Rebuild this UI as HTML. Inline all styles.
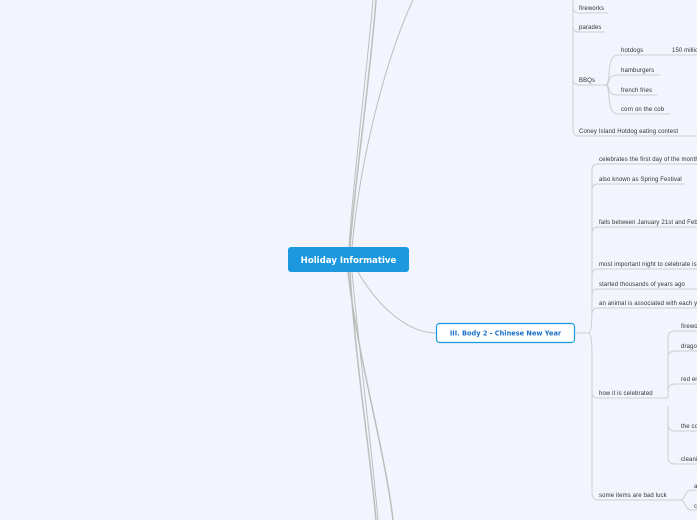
<!DOCTYPE html>
<html><head><style>
html,body{margin:0;padding:0;background:#f2f5fd;width:697px;height:520px;overflow:hidden}
svg{display:block}
text{font-family:"Liberation Sans",sans-serif;font-size:6px;fill:#333;letter-spacing:0.12px}
</style></head><body>
<svg width="697" height="520" viewBox="0 0 697 520">
<g fill="none" stroke="#bdbdbd" stroke-width="1.5">
<path d="M376 0 C370 80 355 180 350 247"/>
<path d="M373 0 C366 80 353 180 349 247" stroke-width="1"/>
<path d="M413 0 C385 60 360 160 352 247" stroke-width="1"/>
<path d="M350 272 C355 360 370 450 376 520"/>
<path d="M348 272 C358 360 385 450 393 520"/>
<path d="M352 272 C360 360 372 450 378 520" stroke-width="1"/>
<path d="M358 272 C380 310 410 333 436 333" stroke-width="1"/>
</g>
<g fill="none" stroke="#cfcfcf" stroke-width="1">
<path d="M573 0 V130 Q573 136 579 136 H697"/>
<path d="M573 7 Q573 13 579 13 H608"/>
<path d="M573 26 Q573 32 579 32 H605"/>
<path d="M573 79 Q573 85 579 85 H600"/>
<path d="M600 85 H605 C612 85 605 55 618 55 H697"/>
<path d="M605 85 C612 85 605 75 618 75 H660"/>
<path d="M605 85 C612 85 605 95 618 95 H657"/>
<path d="M605 85 C612 85 605 114 618 114 H670"/>
<path d="M575 333 H588"/>
<path d="M588 333 C592 333 592 320 592 300 V170 Q592 164 598 164 H697"/>
<path d="M592 190 Q592 184 598 184 H685"/>
<path d="M592 233 Q592 227 598 227 H697"/>
<path d="M592 275 Q592 269 598 269 H697"/>
<path d="M592 295 Q592 289 598 289 H697"/>
<path d="M592 314 Q592 308 598 308 H697"/>
<path d="M588 333 C592 333 592 345 592 360 V492 Q592 500 598 500 H680"/>
<path d="M592 392 Q592 398 598 398 H657 H668"/>
<path d="M668 398 V337 Q668 331 676 331 H697"/>
<path d="M668 357 Q668 351 676 351 H697"/>
<path d="M668 390 Q668 384 676 384 H697"/>
<path d="M668 406 V425 Q668 431 676 431 H697"/>
<path d="M668 420 V458 Q668 464 676 464 H697"/>
<path d="M680 500 C686 500 684 490 692 490 H697"/>
<path d="M680 500 C686 500 684 510 692 510 H697"/>
</g>
<rect x="288" y="247" width="121" height="25" rx="3" fill="#1b98e0"/>
<text x="348.5" y="263" text-anchor="middle" style="font-family:'DejaVu Sans',sans-serif;font-size:8.6px;font-weight:bold;fill:#fff;letter-spacing:0">Holiday Informative</text>
<rect x="436.5" y="323.5" width="138" height="19" rx="3" fill="#fff" stroke="#1b98e0" stroke-width="1.2"/>
<text x="505.5" y="335.5" text-anchor="middle" style="font-family:'DejaVu Sans',sans-serif;font-size:6.6px;font-weight:bold;fill:#1b6fc8;letter-spacing:0">III. Body 2 - Chinese New Year</text>
<text x="579" y="10">fireworks</text>
<text x="579" y="29">parades</text>
<text x="579" y="82">BBQs</text>
<text x="621" y="52">hotdogs</text>
<text x="672" y="52">150 millio</text>
<text x="621" y="72">hamburgers</text>
<text x="621" y="92">french fries</text>
<text x="621" y="111">corn on the cob</text>
<text x="579" y="133">Coney Island Hotdog eating contest</text>
<text x="599" y="161">celebrates the first day of the month</text>
<text x="599" y="181">also known as Spring Festival</text>
<text x="599" y="224">falls between January 21st and February</text>
<text x="599" y="266">most important night to celebrate is</text>
<text x="599" y="286">started thousands of years ago</text>
<text x="599" y="305">an animal is associated with each year</text>
<text x="599" y="395">how it is celebrated</text>
<text x="599" y="497">some items are bad luck</text>
<text x="681" y="328">fireworks</text>
<text x="681" y="348">dragons</text>
<text x="681" y="381">red envelopes</text>
<text x="681" y="428">the color</text>
<text x="681" y="461">cleaning</text>
<text x="694" y="488">a</text>
<text x="694" y="508">c</text>
</svg>
</body></html>
